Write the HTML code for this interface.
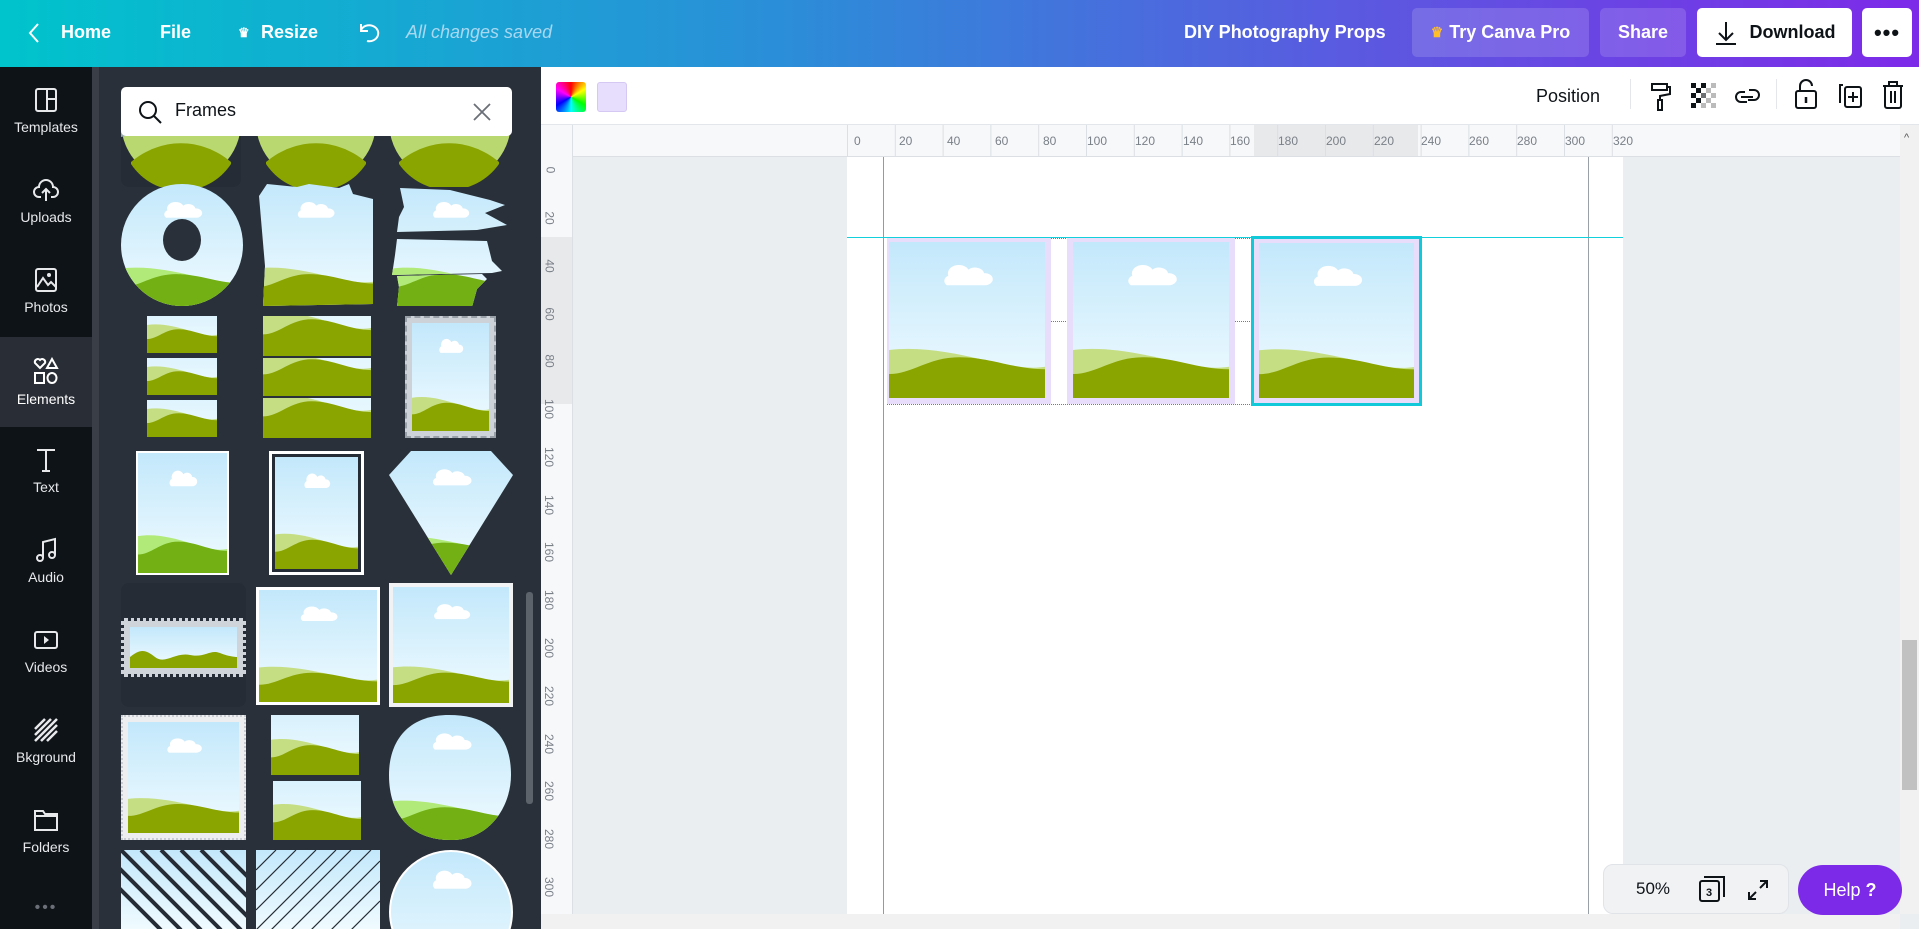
<!DOCTYPE html>
<html><head><meta charset="utf-8">
<style>
*{box-sizing:border-box;margin:0;padding:0}
html,body{width:1919px;height:929px;overflow:hidden}
body{font-family:"Liberation Sans",sans-serif;background:#ebeef1;position:relative}
.a{position:absolute}
#hdr{left:0;top:0;width:1919px;height:67px;background:linear-gradient(90deg,#00c4cc 0%,#2a8fd8 40%,#5a5ae0 70%,#7d2ae8 100%);color:#fff}
#hdr .t{position:absolute;top:22px;font-size:18px;font-weight:bold}
.btn{position:absolute;top:8px;height:49px;border-radius:5px;font-size:18px;font-weight:bold;display:flex;align-items:center;justify-content:center}
#nav{left:0;top:67px;width:92px;height:862px;background:#0e1318;overflow:hidden}
.ni{position:absolute;left:0;width:92px;text-align:center;color:#e6e8ea;font-size:14px}
.ni svg{display:block;margin:0 auto 6px}
#strip{left:92px;top:67px;width:7px;height:862px;background:#3a3f47}
#panel{left:99px;top:67px;width:442px;height:862px;background:#293039;overflow:hidden}
.cell{position:absolute;border-radius:8px;background:#262c35}
#tb{left:541px;top:67px;width:1378px;height:58px;background:#fff;border-bottom:1px solid #e3e6ea}
#rt{left:573px;top:125px;width:1327px;height:32px;background:#f7f8fa;border-bottom:1px solid #dcdfe3;overflow:hidden}
#rl{left:541px;top:125px;width:32px;height:789px;background:#f7f8fa;border-right:1px solid #dcdfe3;overflow:hidden}
.rn{position:absolute;font-size:12px;color:#7a8088}
#page{left:847px;top:157px;width:776px;height:757px;background:#fff}
</style></head><body>
<svg width="0" height="0" style="position:absolute">
<defs>
<linearGradient id="sky" x1="0" y1="0" x2="0" y2="1"><stop offset="0" stop-color="#c3e8fb"/><stop offset="1" stop-color="#f0fbff"/></linearGradient>
<symbol id="fr" viewBox="0 0 100 130" preserveAspectRatio="none">
<rect width="100" height="130" fill="url(#sky)"/>
<path d="M38 28a7 7 0 0 1 13-5a6 6 0 0 1 10 3a5 5 0 0 1 1 10h-25a5 5 0 0 1 1-8z" fill="#fff"/>
<path d="M0 90c20-3 40 2 60 8s30 8 40 6v26H0z" fill="#c5de84"/>
<path d="M0 110c15 0 25-14 45-14s35 10 55 10v24H0z" fill="#8aa400"/>
</symbol>
<symbol id="frg" viewBox="0 0 100 130" preserveAspectRatio="none">
<rect width="100" height="130" fill="url(#sky)"/>
<path d="M38 28a7 7 0 0 1 13-5a6 6 0 0 1 10 3a5 5 0 0 1 1 10h-25a5 5 0 0 1 1-8z" fill="#fff"/>
<path d="M0 90c20-3 40 2 60 8s30 8 40 6v26H0z" fill="#b2ea7a"/>
<path d="M0 110c15 0 25-14 45-14s35 10 55 10v24H0z" fill="#72b014"/>
</symbol>
</defs></svg>

<div id="hdr" class="a">
<svg class="a" style="left:28px;top:22px" width="12" height="22" viewBox="0 0 12 22"><path d="M10 2L2 11l8 9" stroke="#fff" stroke-width="2" fill="none"/></svg>
<div class="t" style="left:61px">Home</div>
<div class="t" style="left:160px">File</div>
<div class="t" style="left:238px;font-size:13px;top:25px">♛</div>
<div class="t" style="left:261px">Resize</div>
<svg class="a" style="left:357px;top:20px" width="26" height="24" viewBox="0 0 26 24"><path d="M4 4v7h7M4 10a9 8 0 1 1 6 11" stroke="#fff" stroke-width="2" fill="none"/></svg>
<div class="t" style="left:406px;font-weight:normal;font-style:italic;color:#a8d8f0">All changes saved</div>
<div class="t" style="left:1184px">DIY Photography Props</div>
<div class="btn" style="left:1412px;width:177px;background:rgba(255,255,255,.15)"><span style="color:#ffbf2b;font-size:14px;margin-right:6px">♛</span>Try Canva Pro</div>
<div class="btn" style="left:1600px;width:86px;background:rgba(255,255,255,.15)">Share</div>
<div class="btn" style="left:1697px;width:155px;background:#fff;color:#0e1318;font-weight:bold"><svg width="24" height="26" viewBox="0 0 24 26" style="margin-right:12px"><path d="M12 2v18M5 13l7 7 7-7M2 24h20" stroke="#0e1318" stroke-width="2" fill="none"/></svg>Download</div>
<div class="btn" style="left:1862px;width:50px;background:#fff;color:#0e1318;font-size:22px;letter-spacing:1px">•••</div>
</div>

<div id="nav" class="a">
<div class="a" style="left:0;top:270px;width:92px;height:90px;background:#292e36"></div>
<div class="ni" style="top:20px"><svg width="24" height="26" viewBox="0 0 24 26"><rect x="2" y="2" width="20" height="22" rx="2" stroke="#e6e8ea" stroke-width="2" fill="none"/><path d="M13 2v22M13 12h9" stroke="#e6e8ea" stroke-width="2"/></svg>Templates</div>
<div class="ni" style="top:110px"><svg width="26" height="26" viewBox="0 0 26 26"><path d="M8 20H6a5 5 0 0 1 0-10 7 7 0 0 1 14 0 5 5 0 0 1 0 10h-2M13 24V12M9 16l4-4 4 4" stroke="#e6e8ea" stroke-width="2" fill="none"/></svg>Uploads</div>
<div class="ni" style="top:200px"><svg width="24" height="26" viewBox="0 0 24 26"><rect x="2" y="2" width="20" height="22" rx="2" stroke="#e6e8ea" stroke-width="2" fill="none"/><circle cx="15" cy="8" r="2" fill="#e6e8ea"/><path d="M3 20l6-9 5 7 3-3 5 5" stroke="#e6e8ea" stroke-width="2" fill="none"/></svg>Photos</div>
<div class="ni" style="top:290px;color:#fff"><svg width="26" height="28" viewBox="0 0 26 28"><path d="M7 11l-5-5a3 3 0 0 1 5-3 3 3 0 0 1 5 3zM19 2l-5 9h10z" stroke="#fff" stroke-width="2" fill="none"/><rect x="2" y="16" width="9" height="10" stroke="#fff" stroke-width="2" fill="none"/><ellipse cx="19" cy="21" rx="4.5" ry="5" stroke="#fff" stroke-width="2" fill="none"/></svg>Elements</div>
<div class="ni" style="top:380px"><svg width="24" height="26" viewBox="0 0 24 26"><path d="M3 3h18M12 3v21M8 24h8" stroke="#e6e8ea" stroke-width="2"/></svg>Text</div>
<div class="ni" style="top:470px"><svg width="24" height="26" viewBox="0 0 24 26"><path d="M9 21V5l12-3v16" stroke="#e6e8ea" stroke-width="2" fill="none"/><circle cx="6" cy="21" r="3" stroke="#e6e8ea" stroke-width="2" fill="none"/><circle cx="18" cy="18" r="3" stroke="#e6e8ea" stroke-width="2" fill="none"/></svg>Audio</div>
<div class="ni" style="top:560px"><svg width="26" height="26" viewBox="0 0 26 26"><rect x="2" y="5" width="22" height="16" rx="2" stroke="#e6e8ea" stroke-width="2" fill="none"/><path d="M11 9l5 4-5 4z" fill="#e6e8ea"/></svg>Videos</div>
<div class="ni" style="top:650px"><svg width="26" height="26" viewBox="0 0 26 26"><path d="M2 12L12 2M2 18L18 2M2 24L24 2M8 24L24 8M14 24L24 14" stroke="#e6e8ea" stroke-width="2.5"/></svg>Bkground</div>
<div class="ni" style="top:740px"><svg width="26" height="26" viewBox="0 0 26 26"><path d="M2 4h8l2 3h12v16H2z M2 9h22" stroke="#e6e8ea" stroke-width="2" fill="none"/></svg>Folders</div>
<div class="ni" style="top:832px;font-size:16px;color:#6b7078;letter-spacing:2px">•••</div>
</div>
<div id="strip" class="a"></div>

<div id="panel" class="a">
<div class="cell" style="left:22px;top:40px;width:120px;height:80px"></div>
<svg class="a" style="left:22px;top:55px" width="120" height="65" viewBox="0 0 120 65"><path d="M0 0h120a60 60 0 0 1-120 0z" fill="#b9d870"/><path d="M0 0h120l0 10c-40-8-80-5-120 5z" fill="#9aa"/><path d="M10 40c30-25 70-25 100 0v2a60 60 0 0 1-100 0z" fill="#8aa400"/></svg>
<svg class="a" style="left:157px;top:55px" width="120" height="65" viewBox="0 0 120 65"><path d="M0 0h120a60 60 0 0 1-120 0z" fill="#b9d870"/><path d="M10 40c30-25 70-25 100 0v2a60 60 0 0 1-100 0z" fill="#8aa400"/></svg>
<svg class="a" style="left:290px;top:55px" width="122" height="65" viewBox="0 0 122 65"><path d="M0 0h122a61 61 0 0 1-122 0z" fill="#b9d870"/><circle cx="61" cy="0" r="14" fill="#293039"/><path d="M10 40c30-25 70-25 100 0v2a61 61 0 0 1-100 0z" fill="#8aa400"/></svg>
<div class="a" style="left:22px;top:20px;width:391px;height:49px;background:#fff;border-radius:5px"></div>
<svg class="a" style="left:38px;top:32px" width="26" height="26" viewBox="0 0 26 26"><circle cx="11" cy="11" r="8" stroke="#0e1318" stroke-width="2" fill="none"/><path d="M17 17l7 7" stroke="#0e1318" stroke-width="2"/></svg>
<div class="a" style="left:76px;top:33px;font-size:18px;color:#0e1318">Frames</div>
<svg class="a" style="left:374px;top:36px" width="18" height="18" viewBox="0 0 18 18"><path d="M1 1l16 16M17 1L1 17" stroke="#6b7078" stroke-width="1.8"/></svg>
<!-- row1 -->
<svg class="a" style="left:22px;top:117px" width="122" height="122" viewBox="0 0 122 122"><clipPath id="c1"><ellipse cx="61" cy="61" rx="61" ry="61"/></clipPath><g clip-path="url(#c1)"><use href="#frg" width="122" height="122"/></g><ellipse cx="61" cy="56" rx="19" ry="21" fill="#293039"/></svg>
<svg class="a" style="left:157px;top:117px" width="118" height="122" viewBox="0 0 118 122"><clipPath id="c2"><path d="M3 12l8-12 30 3 12-3 30 4 10-4 4 10 20 5v105l-110 2 2-40z"/></clipPath><g clip-path="url(#c2)"><use href="#fr" width="118" height="122"/></g></svg>
<svg class="a" style="left:293px;top:117px" width="116" height="122" viewBox="0 0 116 122"><clipPath id="c3"><path d="M8 4l50 2 40 10 15 5-20 8 22 12-30 5-80 2 2-15 5-10zM5 55l90 2 5 20 10 10-10 2-100 2 3-20zM5 92l85-2 5 5-10 10-5 18-75 0 2-20z"/></clipPath><g clip-path="url(#c3)"><use href="#frg" width="116" height="122"/></g></svg>
<!-- row2 -->
<svg class="a" style="left:48px;top:249px" width="70" height="122" viewBox="0 0 70 122"><svg x="0" y="0" width="70" height="37" viewBox="0 0 100 130" preserveAspectRatio="xMidYMax slice"><use href="#fr" width="100" height="130"/></svg><svg x="0" y="42" width="70" height="37" viewBox="0 0 100 130" preserveAspectRatio="xMidYMax slice"><use href="#fr" width="100" height="130"/></svg><svg x="0" y="84" width="70" height="37" viewBox="0 0 100 130" preserveAspectRatio="xMidYMax slice"><use href="#fr" width="100" height="130"/></svg></svg>
<svg class="a" style="left:164px;top:249px" width="108" height="122" viewBox="0 0 108 122"><svg x="0" y="0" width="108" height="40" viewBox="0 0 100 130" preserveAspectRatio="xMidYMax slice"><use href="#fr" width="100" height="130"/></svg><svg x="0" y="42" width="108" height="38" viewBox="0 0 100 130" preserveAspectRatio="xMidYMax slice"><use href="#fr" width="100" height="130"/></svg><svg x="0" y="82" width="108" height="40" viewBox="0 0 100 130" preserveAspectRatio="xMidYMax slice"><use href="#fr" width="100" height="130"/></svg></svg>
<div class="a" style="left:306px;top:249px;width:91px;height:122px;background:#cdd2d9;border:2px dashed #9aa0a8;padding:5px"><svg width="77" height="108" style="display:block"><use href="#fr" width="77" height="108"/></svg></div>
<!-- row3 -->
<div class="a" style="left:37px;top:384px;width:93px;height:124px;background:#fff;padding:2px"><svg width="89" height="120" style="display:block"><use href="#frg" width="89" height="120"/></svg></div>
<div class="a" style="left:170px;top:384px;width:95px;height:124px;background:#fff;padding:3px"><div style="width:89px;height:118px;background:#262c35;padding:3px"><svg width="83" height="112" style="display:block"><use href="#fr" width="83" height="112"/></svg></div></div>
<svg class="a" style="left:290px;top:384px" width="124" height="124" viewBox="0 0 124 124"><clipPath id="c4"><path d="M22 0h80l22 24-62 100L0 24z"/></clipPath><g clip-path="url(#c4)"><use href="#frg" width="124" height="124"/></g></svg>
<!-- row4 -->
<div class="cell" style="left:22px;top:516px;width:125px;height:124px"></div>
<div class="a" style="left:22px;top:551px;width:125px;height:59px;background:#cfd4da;border:3px dotted #262c35;padding:6px"><svg width="107" height="41" viewBox="0 0 107 41" preserveAspectRatio="none" style="display:block"><rect width="107" height="41" fill="url(#sky)"/><path d="M0 30c10-8 15-8 25 0s20-5 35-2 20-6 30-2 17 4 17 4v11H0z" fill="#8aa400"/></svg></div>
<div class="a" style="left:157px;top:520px;width:124px;height:118px;background:#fff;padding:3px"><svg width="118" height="112" style="display:block"><use href="#fr" width="118" height="112"/></svg></div>
<div class="a" style="left:290px;top:516px;width:124px;height:124px;background:#f1f2f3;padding:4px"><svg width="116" height="116" style="display:block"><use href="#fr" width="116" height="116"/></svg></div>
<!-- row5 -->
<div class="a" style="left:22px;top:648px;width:125px;height:125px;background:#eceef0;border:2px dotted #c9ccd0;padding:5px"><svg width="111" height="111" style="display:block"><use href="#fr" width="111" height="111"/></svg></div>
<svg class="a" style="left:172px;top:648px" width="90" height="125" viewBox="0 0 90 125"><svg x="0" y="0" width="88" height="60" viewBox="0 0 100 130" preserveAspectRatio="xMidYMax slice"><use href="#fr" width="100" height="130"/></svg><svg x="2" y="66" width="88" height="59" viewBox="0 0 100 130" preserveAspectRatio="xMidYMax slice"><use href="#fr" width="100" height="130"/></svg></svg>
<svg class="a" style="left:290px;top:648px" width="124" height="125" viewBox="0 0 124 125"><clipPath id="c5"><path d="M60 0c40 0 62 20 62 60 0 30-20 65-60 65-40 0-62-25-62-65C0 25 20 0 60 0z"/></clipPath><g clip-path="url(#c5)"><use href="#frg" width="124" height="125"/></g></svg>
<!-- row6 -->
<svg class="a" style="left:22px;top:783px" width="125" height="80" viewBox="0 0 125 80"><rect width="125" height="80" fill="url(#sky)"/><g stroke="#262c35" stroke-width="4"><path d="M-40 0l80 80M-20 0l80 80M0 0l80 80M20 0l80 80M40 0l80 80M60 0l80 80M80 0l80 80M100 0l80 80"/></g></svg>
<svg class="a" style="left:157px;top:783px" width="124" height="80" viewBox="0 0 124 80"><rect width="124" height="80" fill="url(#sky)"/><g stroke="#262c35" stroke-width="1.2"><path d="M0 20L20 0M0 40L40 0M0 60L60 0M0 80L80 0M15 80L95 0M35 80L115 0M55 80L124 11M75 80L124 31M95 80L124 51"/></g></svg>
<svg class="a" style="left:290px;top:783px" width="124" height="80" viewBox="0 0 124 80"><clipPath id="c6"><circle cx="62" cy="62" r="61"/></clipPath><g clip-path="url(#c6)"><use href="#fr" width="124" height="140"/></g><circle cx="62" cy="62" r="61" stroke="#fff" stroke-width="2" fill="none"/></svg>
<div class="a" style="left:427px;top:525px;width:7px;height:212px;background:#5d636b;border-radius:3px"></div>
</div>
<div class="a" style="left:541px;top:452px;width:14px;height:96px;background:#293039;border-radius:0 12px 12px 0;color:#fff;font-size:14px;line-height:96px;text-align:center">‹</div>

<div id="tb" class="a">
<div class="a" style="left:15px;top:15px;width:30px;height:30px;border-radius:3px;background:conic-gradient(red,yellow,lime,cyan,blue,magenta,red)"></div>
<div class="a" style="left:56px;top:15px;width:30px;height:30px;border-radius:3px;background:#e7ddfd;border:1px solid #d5c8f3"></div>
<div class="a" style="left:995px;top:19px;font-size:18px;color:#0e1318">Position</div>
<div class="a" style="left:1089px;top:12px;width:1px;height:30px;background:#e3e6ea"></div>
<svg class="a" style="left:1108px;top:14px" width="24" height="32" viewBox="0 0 24 32"><path d="M3 3h15v6H3zM18 6h3v7l-10 2v4M9 19h4v10H9z" stroke="#0e1318" stroke-width="2" fill="none"/></svg>
<svg class="a" style="left:1150px;top:16px" width="26" height="28" viewBox="0 0 26 28"><g fill="#0e1318"><rect x="0" y="0" width="5" height="5"/><rect x="10" y="0" width="5" height="5"/><rect x="5" y="5" width="5" height="5"/><rect x="0" y="10" width="5" height="5"/><rect x="10" y="10" width="5" height="5" opacity=".6"/><rect x="5" y="15" width="5" height="5"/><rect x="0" y="20" width="5" height="5"/></g><g fill="#bbb"><rect x="15" y="5" width="5" height="5"/><rect x="20" y="0" width="5" height="5"/><rect x="15" y="15" width="5" height="5"/><rect x="20" y="10" width="5" height="5"/><rect x="10" y="20" width="5" height="5"/><rect x="20" y="20" width="5" height="5"/></g></svg>
<svg class="a" style="left:1192px;top:17px" width="28" height="24" viewBox="0 0 28 24"><path d="M12 8H8a5 5 0 0 0 0 10h6M16 6h5a5 5 0 0 1 0 10h-6M8 13h12" stroke="#0e1318" stroke-width="2" fill="none"/></svg>
<div class="a" style="left:1235px;top:12px;width:1px;height:30px;background:#e3e6ea"></div>
<svg class="a" style="left:1253px;top:11px" width="24" height="32" viewBox="0 0 24 32"><rect x="2" y="13" width="20" height="17" rx="2" stroke="#0e1318" stroke-width="2" fill="none"/><path d="M6 13V8a6 6 0 0 1 12 0" stroke="#0e1318" stroke-width="2" fill="none"/><path d="M12 19v6" stroke="#0e1318" stroke-width="2.5"/></svg>
<svg class="a" style="left:1296px;top:14px" width="26" height="28" viewBox="0 0 26 28"><path d="M6 4H3v18" stroke="#0e1318" stroke-width="2" fill="none"/><rect x="8" y="6" width="16" height="20" rx="2" stroke="#0e1318" stroke-width="2" fill="none"/><path d="M16 11v10M11 16h10" stroke="#0e1318" stroke-width="2"/></svg>
<svg class="a" style="left:1340px;top:13px" width="24" height="30" viewBox="0 0 24 30"><path d="M2 6h20M8 6V2h8v4M4 6v20a2 2 0 0 0 2 2h12a2 2 0 0 0 2-2V6M10 11v12M14 11v12" stroke="#0e1318" stroke-width="2" fill="none"/></svg>
</div>

<div id="rt" class="a">
<div class="a" style="left:681px;top:0;width:164px;height:31px;background:#e8e9eb"></div>
<div class="rn" style="left:281px;top:9px">0</div><div class="rn" style="left:326px;top:9px">20</div><div class="rn" style="left:374px;top:9px">40</div><div class="rn" style="left:422px;top:9px">60</div><div class="rn" style="left:470px;top:9px">80</div><div class="rn" style="left:514px;top:9px">100</div><div class="rn" style="left:562px;top:9px">120</div><div class="rn" style="left:610px;top:9px">140</div><div class="rn" style="left:657px;top:9px">160</div><div class="rn" style="left:705px;top:9px">180</div><div class="rn" style="left:753px;top:9px">200</div><div class="rn" style="left:801px;top:9px">220</div><div class="rn" style="left:848px;top:9px">240</div><div class="rn" style="left:896px;top:9px">260</div><div class="rn" style="left:944px;top:9px">280</div><div class="rn" style="left:992px;top:9px">300</div><div class="rn" style="left:1040px;top:9px">320</div>
<div class="a" style="left:274px;top:0;width:1px;height:31px;background:#dcdfe3;box-shadow:47.8px 0 #dcdfe3,95.6px 0 #dcdfe3,143.4px 0 #dcdfe3,191.2px 0 #dcdfe3,239px 0 #dcdfe3,286.8px 0 #dcdfe3,334.6px 0 #dcdfe3,382.4px 0 #dcdfe3,430.2px 0 #dcdfe3,478px 0 #dcdfe3,525.8px 0 #dcdfe3,573.6px 0 #dcdfe3,621.4px 0 #dcdfe3,669.2px 0 #dcdfe3,717px 0 #dcdfe3,764.8px 0 #dcdfe3"></div>
</div>
<div id="rl" class="a">
<div class="a" style="left:0;top:112px;width:31px;height:167px;background:#e8e9eb"></div>
<div class="a" style="left:0;top:32px;width:31px;height:750px">
<div class="rn" style="left:6px;top:6px;transform:rotate(90deg)">0</div>
<div class="rn" style="left:2px;top:54px;transform:rotate(90deg)">20</div><div class="rn" style="left:2px;top:102px;transform:rotate(90deg)">40</div><div class="rn" style="left:2px;top:150px;transform:rotate(90deg)">60</div><div class="rn" style="left:2px;top:197px;transform:rotate(90deg)">80</div><div class="rn" style="left:-2px;top:245px;transform:rotate(90deg)">100</div><div class="rn" style="left:-2px;top:293px;transform:rotate(90deg)">120</div><div class="rn" style="left:-2px;top:341px;transform:rotate(90deg)">140</div><div class="rn" style="left:-2px;top:388px;transform:rotate(90deg)">160</div><div class="rn" style="left:-2px;top:436px;transform:rotate(90deg)">180</div><div class="rn" style="left:-2px;top:484px;transform:rotate(90deg)">200</div><div class="rn" style="left:-2px;top:532px;transform:rotate(90deg)">220</div><div class="rn" style="left:-2px;top:580px;transform:rotate(90deg)">240</div><div class="rn" style="left:-2px;top:627px;transform:rotate(90deg)">260</div><div class="rn" style="left:-2px;top:675px;transform:rotate(90deg)">280</div><div class="rn" style="left:-2px;top:723px;transform:rotate(90deg)">300</div>
</div>
</div>

<div id="page" class="a"></div>
<div class="a" style="left:883px;top:157px;width:1px;height:757px;background:#12d0dc"></div>
<div class="a" style="left:1588px;top:157px;width:1px;height:757px;background:#9aa0a8"></div>
<div class="a" style="left:847px;top:237px;width:776px;height:1px;background:#12d0dc"></div>
<div class="a" style="left:887px;top:238px;width:533px;height:0;border-top:1px dotted #e030e0"></div>
<div class="a" style="left:887px;top:321px;width:533px;height:0;border-top:1px dotted #e030e0"></div>
<div class="a" style="left:887px;top:404px;width:533px;height:0;border-top:1px dotted #e030e0"></div>
<div class="a" style="left:887px;top:238px;width:164px;height:166px;background:#e8defc;padding:4px 6px 6px 2px"><svg width="156" height="156" style="display:block"><use href="#fr" width="156" height="156"/></svg></div>
<div class="a" style="left:1067px;top:238px;width:168px;height:166px;background:#e8defc;padding:4px 6px 6px 6px"><svg width="156" height="156" style="display:block"><use href="#fr" width="156" height="156"/></svg></div>
<div class="a" style="left:1251px;top:236px;width:171px;height:170px;border:3px solid #12c9d9;padding:4px 5px 5px 5px;background:#e8defc"><svg width="155" height="155" style="display:block"><use href="#fr" width="155" height="155"/></svg></div>

<div class="a" style="left:1900px;top:125px;width:19px;height:789px;background:#f1f1f1"></div>
<div class="a" style="left:1902px;top:640px;width:15px;height:150px;background:#c1c1c1"></div>
<div class="a" style="left:1904px;top:132px;font-size:11px;color:#555">^</div>
<div class="a" style="left:541px;top:914px;width:1359px;height:15px;background:#f1f1f1"></div>
<div class="a" style="left:1603px;top:864px;width:186px;height:50px;background:#f1f2f4;border-radius:10px;border:1px solid #e0e3e7"></div>
<div class="a" style="left:1636px;top:879px;font-size:17px;color:#0e1318">50%</div>
<svg class="a" style="left:1698px;top:874px" width="30" height="30" viewBox="0 0 30 30"><path d="M6 3h20v20" stroke="#0e1318" stroke-width="2" fill="none"/><rect x="2" y="7" width="19" height="20" rx="2" stroke="#0e1318" stroke-width="2" fill="none"/><text x="8" y="22" font-size="11" font-family="Liberation Sans" font-weight="bold" fill="#0e1318">3</text></svg>
<svg class="a" style="left:1746px;top:878px" width="24" height="24" viewBox="0 0 24 24"><path d="M14 3h7v7M21 3l-7 7M10 21H3v-7M3 21l7-7" stroke="#0e1318" stroke-width="2" fill="none"/></svg>
<div class="a" style="left:1798px;top:865px;width:104px;height:50px;border-radius:25px;background:#7d2ae8;color:#fff;font-size:18px;line-height:50px;text-align:center">Help <b>?</b></div>
</body></html>
